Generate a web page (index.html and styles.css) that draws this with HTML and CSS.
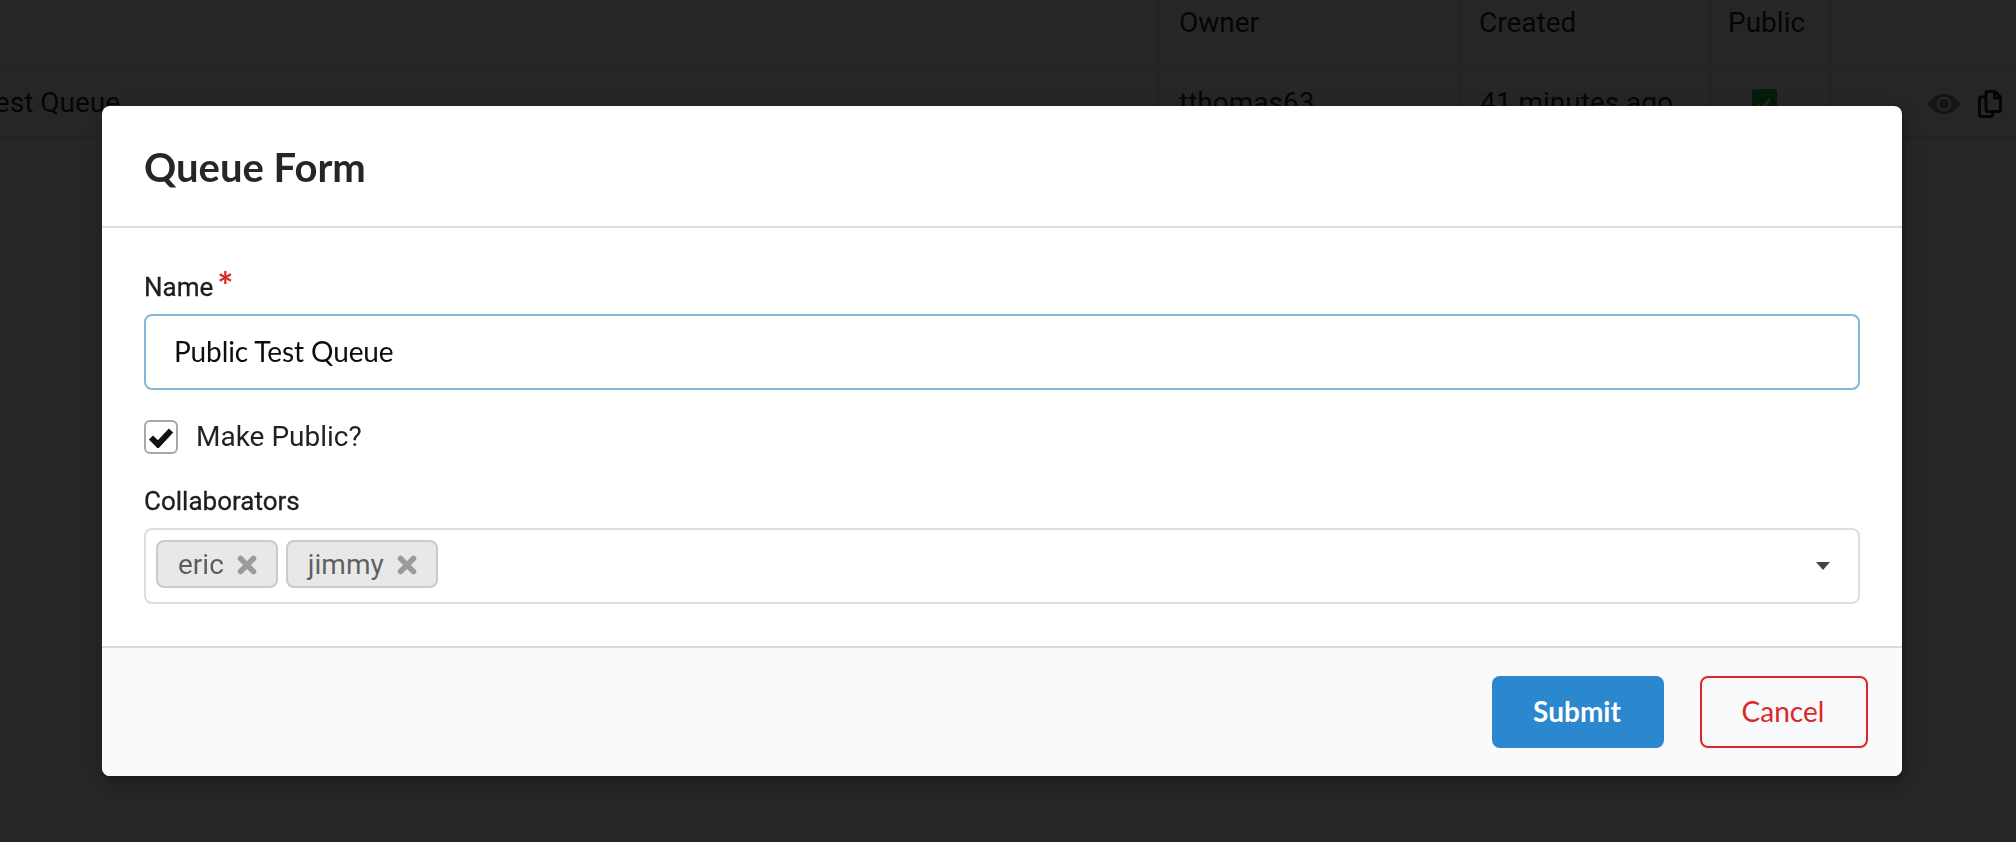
FILE: index.html
```html
<!DOCTYPE html>
<html lang="en">
<head>
<meta charset="utf-8">
<title>Queue Form</title>
<link rel="stylesheet" href="styles.css">
</head>
<body>
<main class="page">
  <table class="queues">
    <colgroup>
      <col class="col-name"><col class="col-owner"><col class="col-created"><col class="col-public"><col class="col-actions">
    </colgroup>
    <thead>
      <tr><th>Name</th><th>Owner</th><th>Created</th><th>Public</th><th class="actions-head">Actions</th></tr>
    </thead>
    <tbody>
      <tr>
        <td>Public Test Queue</td>
        <td>tthomas63</td>
        <td>41 minutes ago</td>
        <td><span class="public-flag"><svg viewBox="0 0 24 28" width="24" height="28"><path d="M6 16l4 4 8-10" fill="none" stroke="#fff" stroke-width="3"/></svg></span></td>
        <td class="actions-cell">
          <svg class="eye" viewBox="0 0 32 20" width="32" height="20"><path fill-rule="evenodd" d="M16 0C9 0 3.500 4 0 10c3.500 6 9 10 16 10s12.500-4 16-10C28.500 4 23 0 16 0zm0 2.500a7.500 7.500 0 1 1 0 15 7.500 7.500 0 0 1 0-15zm0 2a5.500 5.500 0 1 0 0 11 5.500 5.500 0 0 0 0-11z"/><circle cx="14.500" cy="8" r="2.500"/></svg>
          <svg class="copy" viewBox="0 0 24 28" width="24" height="28"><path d="M8 5V3a1.500 1.500 0 0 1 1.500-1.500H17L22.500 7v13a1.500 1.500 0 0 1-1.500 1.500H9.500A1.500 1.500 0 0 1 8 20V5zM8 7H3a1.500 1.500 0 0 0-1.500 1.500V25A1.500 1.500 0 0 0 3 26.500h10a1.500 1.500 0 0 0 1.500-1.500v-3.500M16.500 1.500V8h6" fill="none" stroke="currentColor" stroke-width="3" stroke-linejoin="round"/></svg>
        </td>
      </tr>
    </tbody>
  </table>
</main>

<div class="dimmer">
  <form class="modal">
    <header class="modal-header">Queue Form</header>
    <div class="modal-body">
      <label class="field-label" for="queue-name">Name<span class="required">*</span></label>
      <input class="text-input" id="queue-name" type="text" value="Public Test Queue">
      <div class="check-row">
        <span class="check-box"><svg viewBox="0 0 26 22" width="26" height="22"><path d="M3 11.500l7 7L23 4.500" fill="none" stroke="#111" stroke-width="6"/></svg></span>
        <span class="check-label">Make Public?</span>
      </div>
      <div class="field-label collab-label">Collaborators</div>
      <div class="multi-select">
        <span class="chip">eric<svg class="chip-x" viewBox="0 0 20 20" width="20" height="20"><path d="M3.500 3.500l13 13M16.500 3.500l-13 13" stroke="currentColor" stroke-width="5.500" stroke-linecap="round"/></svg></span>
        <span class="chip">jimmy<svg class="chip-x" viewBox="0 0 20 20" width="20" height="20"><path d="M3.500 3.500l13 13M16.500 3.500l-13 13" stroke="currentColor" stroke-width="5.500" stroke-linecap="round"/></svg></span>
        <span class="caret"></span>
      </div>
    </div>
    <footer class="modal-footer">
      <button class="btn btn-submit" type="button">Submit</button>
      <button class="btn btn-cancel" type="button">Cancel</button>
    </footer>
  </form>
</div>
</body>
</html>
```

FILE: styles.css
```css
* { box-sizing: border-box; }

html, body {
  margin: 0;
  height: 100%;
  overflow: hidden;
  background: #fff;
}

.page {
  width: 2016px;
  height: 842px;
  overflow: hidden;
}

.queues {
  table-layout: fixed;
  width: 2160px;
  margin-left: -130px;
  border-collapse: collapse;
  font: 400 28px/1.2 Roboto, sans-serif;
  color: rgba(0, 0, 0, 0.87);
}

.col-name { width: 1288px; }
.col-owner { width: 301px; }
.col-created { width: 251px; }
.col-public { width: 120px; }
.col-actions { width: 200px; }

.queues th {
  height: 68px;
  padding: 6px 0 28px 20px;
  font-weight: 400;
  text-align: left;
  background: #fff;
  border-left: 2px solid rgba(34, 36, 38, 0.1);
  border-bottom: 2px solid rgba(34, 36, 38, 0.1);
}

.queues td {
  height: 68px;
  padding: 0 0 0 20px;
  border-left: 2px solid rgba(34, 36, 38, 0.1);
  border-bottom: 2px solid rgba(34, 36, 38, 0.1);
  background: #fff;
}

.queues th:first-child,
.queues td:first-child {
  padding-left: 26px;
  border-left: 0;
}

.queues th:nth-child(3) { padding-left: 19px; }
.queues th:nth-child(4) { padding-left: 17px; }

.queues .actions-head { padding-left: 184px; }
.queues .actions-cell { padding-left: 97px; white-space: nowrap; }

.public-flag {
  display: flex;
  width: 25px;
  height: 28px;
  margin-left: 21px;
  background: #21ba45;
  border-radius: 3px;
}

.eye { color: #888; fill: #888; vertical-align: middle; }
.copy { margin-left: 11px; vertical-align: middle; }

.dimmer {
  position: fixed;
  inset: 0;
  background: rgba(0, 0, 0, 0.85);
}

.modal {
  position: absolute;
  left: 102px;
  top: 106px;
  width: 1800px;
  height: 670px;
  display: flex;
  flex-direction: column;
  background: #fff;
  border-radius: 8px;
  box-shadow: 2px 6px 6px rgba(0, 0, 0, 0.2), 2px 6px 30px 4px rgba(0, 0, 0, 0.2);
  overflow: hidden;
}

.modal-header {
  display: flex;
  align-items: center;
  height: 122px;
  padding: 3px 42px 0;
  border-bottom: 2px solid #dedede;
  font: 700 40px/1.2857 Lato, sans-serif;
  color: rgba(0, 0, 0, 0.85);
}

.modal-body {
  flex: 1;
  padding: 43px 42px 0;
}

.field-label {
  display: block;
  height: 32px;
  margin-bottom: 11px;
  font: 400 26px/32px Roboto, sans-serif;
  -webkit-text-stroke: 0.3px currentColor;
  color: rgba(0, 0, 0, 0.87);
}

.required {
  margin-left: 4px;
  position: relative;
  top: 4px;
  font: 700 38px/0 Lato, sans-serif;
  -webkit-text-stroke: 0;
  color: #db2828;
}

.text-input {
  display: block;
  width: 1716px;
  height: 76px;
  padding: 0 28px 2px;
  border: 2px solid #85b7d9;
  border-radius: 8px;
  outline: 0;
  font: 400 28px/1 Lato, sans-serif;
  letter-spacing: -0.1px;
  color: rgba(0, 0, 0, 0.95);
}

.check-row {
  display: flex;
  align-items: center;
  height: 34px;
  margin-top: 30px;
}

.check-box {
  display: flex;
  align-items: center;
  justify-content: center;
  width: 34px;
  height: 34px;
  border: 2px solid #a8a8a8;
  border-radius: 6px;
}

.check-label {
  margin-left: 18px;
  font: 400 28px/34px Roboto, sans-serif;
  color: rgba(0, 0, 0, 0.87);
}

.collab-label {
  margin-top: 31px;
}

.multi-select {
  display: flex;
  align-items: flex-start;
  gap: 8px;
  width: 1716px;
  height: 76px;
  padding: 10px 28px 0 10px;
  border: 2px solid #dedede;
  border-radius: 8px;
}

.chip {
  display: flex;
  align-items: center;
  height: 48px;
  padding: 1px 19px 0 20px;
  background: #e8e8e8;
  border: 2px solid #cacaca;
  border-radius: 8px;
  font: 400 28px/1 Roboto, sans-serif;
  color: rgba(0, 0, 0, 0.6);
}

.chip-x {
  margin-left: 13px;
  color: #9b9b9b;
}

.caret {
  align-self: center;
  margin: -10px 0 0 auto;
  width: 0;
  height: 0;
  border-style: solid;
  border-width: 8px 7.500px 0;
  border-color: #444 transparent transparent;
}

.modal-footer {
  display: flex;
  justify-content: flex-end;
  gap: 36px;
  height: 130px;
  padding: 28px 34px;
  background: #f9fafb;
  border-top: 2px solid #d9dadc;
}

.btn {
  height: 72px;
  padding: 0 2px 2px 0;
  border-radius: 8px;
  font: 400 28px/1 Lato, sans-serif;
  cursor: pointer;
}

.btn-submit {
  width: 172px;
  border: 0;
  background: #2b88cf;
  color: #fff;
  font-weight: 700;
}

.btn-cancel {
  width: 168px;
  border: 2px solid #db2828;
  background: transparent;
  color: #db2828;
}
```
